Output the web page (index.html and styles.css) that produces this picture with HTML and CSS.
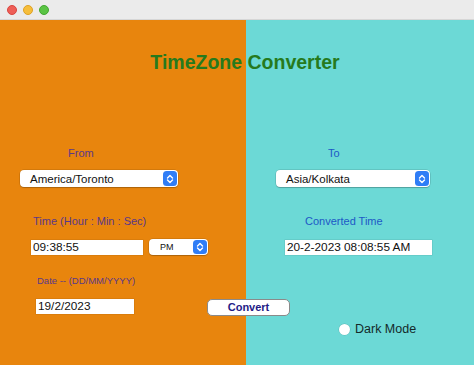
FILE: index.html
```html
<!DOCTYPE html>
<html>
<head>
<meta charset="utf-8">
<link rel="stylesheet" href="styles.css">
</head>
<body>
<div class="window">
  <div class="titlebar">
    <span class="light red"></span>
    <span class="light yellow"></span>
    <span class="light green"></span>
  </div>
  <div class="content">
    <h1 class="title">TimeZone Converter</h1>

    <div class="row row-lab1">
      <div class="half left"><span class="lab purple from">From</span></div>
      <div class="half right"><span class="lab blue to">To</span></div>
    </div>

    <div class="row row-sel">
      <div class="half left">
        <div class="select sel-from"><span class="sel-text">America/Toronto</span><span class="stepper"><svg width="8" height="10" viewBox="0 0 8 10"><path d="M1.5 4 L4 1.5 L6.5 4 M1.5 6 L4 8.5 L6.5 6" fill="none" stroke="#fff" stroke-width="1.4" stroke-linecap="round" stroke-linejoin="round"/></svg></span></div>
      </div>
      <div class="half right">
        <div class="select sel-to"><span class="sel-text">Asia/Kolkata</span><span class="stepper"><svg width="8" height="10" viewBox="0 0 8 10"><path d="M1.5 4 L4 1.5 L6.5 4 M1.5 6 L4 8.5 L6.5 6" fill="none" stroke="#fff" stroke-width="1.4" stroke-linecap="round" stroke-linejoin="round"/></svg></span></div>
      </div>
    </div>

    <div class="row row-lab2">
      <div class="half left"><span class="lab purple time">Time (Hour : Min : Sec)</span></div>
      <div class="half right"><span class="lab blue conv">Converted Time</span></div>
    </div>

    <div class="row row-time">
      <div class="half left">
        <div class="field f-time">09:38:55</div>
        <div class="select sel-ampm"><span class="sel-text small">PM</span><span class="stepper"><svg width="8" height="10" viewBox="0 0 8 10"><path d="M1.5 4 L4 1.5 L6.5 4 M1.5 6 L4 8.5 L6.5 6" fill="none" stroke="#fff" stroke-width="1.4" stroke-linecap="round" stroke-linejoin="round"/></svg></span></div>
      </div>
      <div class="half right">
        <div class="field f-conv">20-2-2023 08:08:55 AM</div>
      </div>
    </div>

    <div class="row row-lab3">
      <div class="half left"><span class="lab purple date">Date -- (DD/MM/YYYY)</span></div>
      <div class="half right"></div>
    </div>

    <div class="row row-date">
      <div class="field f-date">19/2/2023</div>
      <button class="convert">Convert</button>
    </div>

    <div class="row row-dark">
      <div class="half left"></div>
      <div class="half right">
        <span class="radio"></span><span class="dark-text">Dark Mode</span>
      </div>
    </div>
  </div>
</div>
</body>
</html>
```

FILE: styles.css
```css
* { box-sizing: border-box; }
html, body { margin: 0; padding: 0; }
body {
  width: 474px;
  height: 365px;
  overflow: hidden;
  font-family: "Liberation Sans", Arial, sans-serif;
  background: #ececec;
}
.window { width: 474px; height: 365px; display: flex; flex-direction: column; }
.titlebar {
  height: 20px;
  background: #ebebeb;
  display: flex;
  align-items: center;
  padding-left: 7px;
  gap: 6px;
  border-bottom: 1px solid #d6d6d6;
}
.light { width: 10px; height: 10px; border-radius: 50%; display: block; }
.red { background: #ee5e57; border: 0.5px solid #d9463f; }
.yellow { background: #f6be3b; border: 0.5px solid #dea124; }
.green { background: #5ac444; border: 0.5px solid #43a731; }

.content {
  flex: 1;
  background: linear-gradient(to right, #e8850d 0, #e8850d 246px, #6cd9d6 246px, #6cd9d6 100%);
}
.title {
  margin: 30px 0 0 0;
  height: 24px;
  line-height: 24px;
  font-size: 19.5px;
  font-weight: bold;
  color: #267a1d;
  text-align: center;
  padding-left: 16px;
}
.row { display: flex; }
.half.left { width: 246px; flex: none; display: flex; align-items: center; }
.half.right { flex: 1; display: flex; align-items: center; }

.lab { font-size: 11px; line-height: 14px; white-space: nowrap; }
.purple { color: #5a3889; }
.blue { color: #1d58c6; }

.row-lab1 { margin-top: 72px; height: 14px; }
.from { margin-left: 68px; }
.to { margin-left: 82px; }

.row-sel { margin-top: 10px; height: 17px; }
.select {
  height: 17px;
  background: #fff;
  border-radius: 4px;
  box-shadow: 0 0 0 0.5px rgba(0,0,0,0.18), 0 1px 1px rgba(0,0,0,0.18);
  display: flex;
  align-items: center;
  justify-content: space-between;
  padding: 0 1px 0 10px;
}
.sel-text { font-size: 11.5px; color: #111; }
.sel-text.small { font-size: 9px; }
.stepper {
  width: 14px;
  height: 15px;
  background: #2f7df6;
  border-radius: 3.5px;
  display: flex;
  align-items: center;
  justify-content: center;
}
.sel-from { margin-left: 20px; width: 158px; }
.sel-to { margin-left: 30px; width: 154px; }

.row-lab2 { margin-top: 27px; height: 14px; }
.time { margin-left: 33px; }
.conv { margin-left: 59px; }

.row-time { margin-top: 11px; height: 16px; }
.field {
  height: 15px;
  background: #fff;
  font-size: 11.8px;
  line-height: 15px;
  color: #111;
  padding-left: 2px;
  white-space: nowrap;
  box-shadow: 0 0 0 0.5px rgba(0,0,0,0.12);
}
.f-time { margin-left: 31px; width: 112px; }
.sel-ampm { margin-left: 6px; width: 59px; height: 16px; padding-left: 11px; }
.sel-ampm .stepper { height: 14px; }
.f-conv { margin-left: 39px; width: 147px; }

.row-lab3 { margin-top: 20px; height: 12px; }
.date { margin-left: 37px; font-size: 9.5px; line-height: 12px; }

.row-date { margin-top: 12px; height: 17px; align-items: flex-start; }
.f-date { margin-left: 36px; width: 98px; }
.convert {
  margin-left: 73px;
  width: 83px;
  height: 17px;
  background: #fff;
  border: 1px solid #8a8a8a;
  border-radius: 5px;
  font-family: "Liberation Sans", Arial, sans-serif;
  font-weight: bold;
  font-size: 11px;
  color: #231a86;
  padding: 0;
  line-height: 15px;
}

.row-dark { margin-top: 6px; height: 14px; }
.radio {
  width: 11px;
  height: 11px;
  border-radius: 50%;
  background: #fff;
  margin-left: 93px;
  box-shadow: 0 0 0 0.5px rgba(0,0,0,0.15);
}
.dark-text { margin-left: 5px; font-size: 12.5px; color: #142a2a; line-height: 14px; }
```
